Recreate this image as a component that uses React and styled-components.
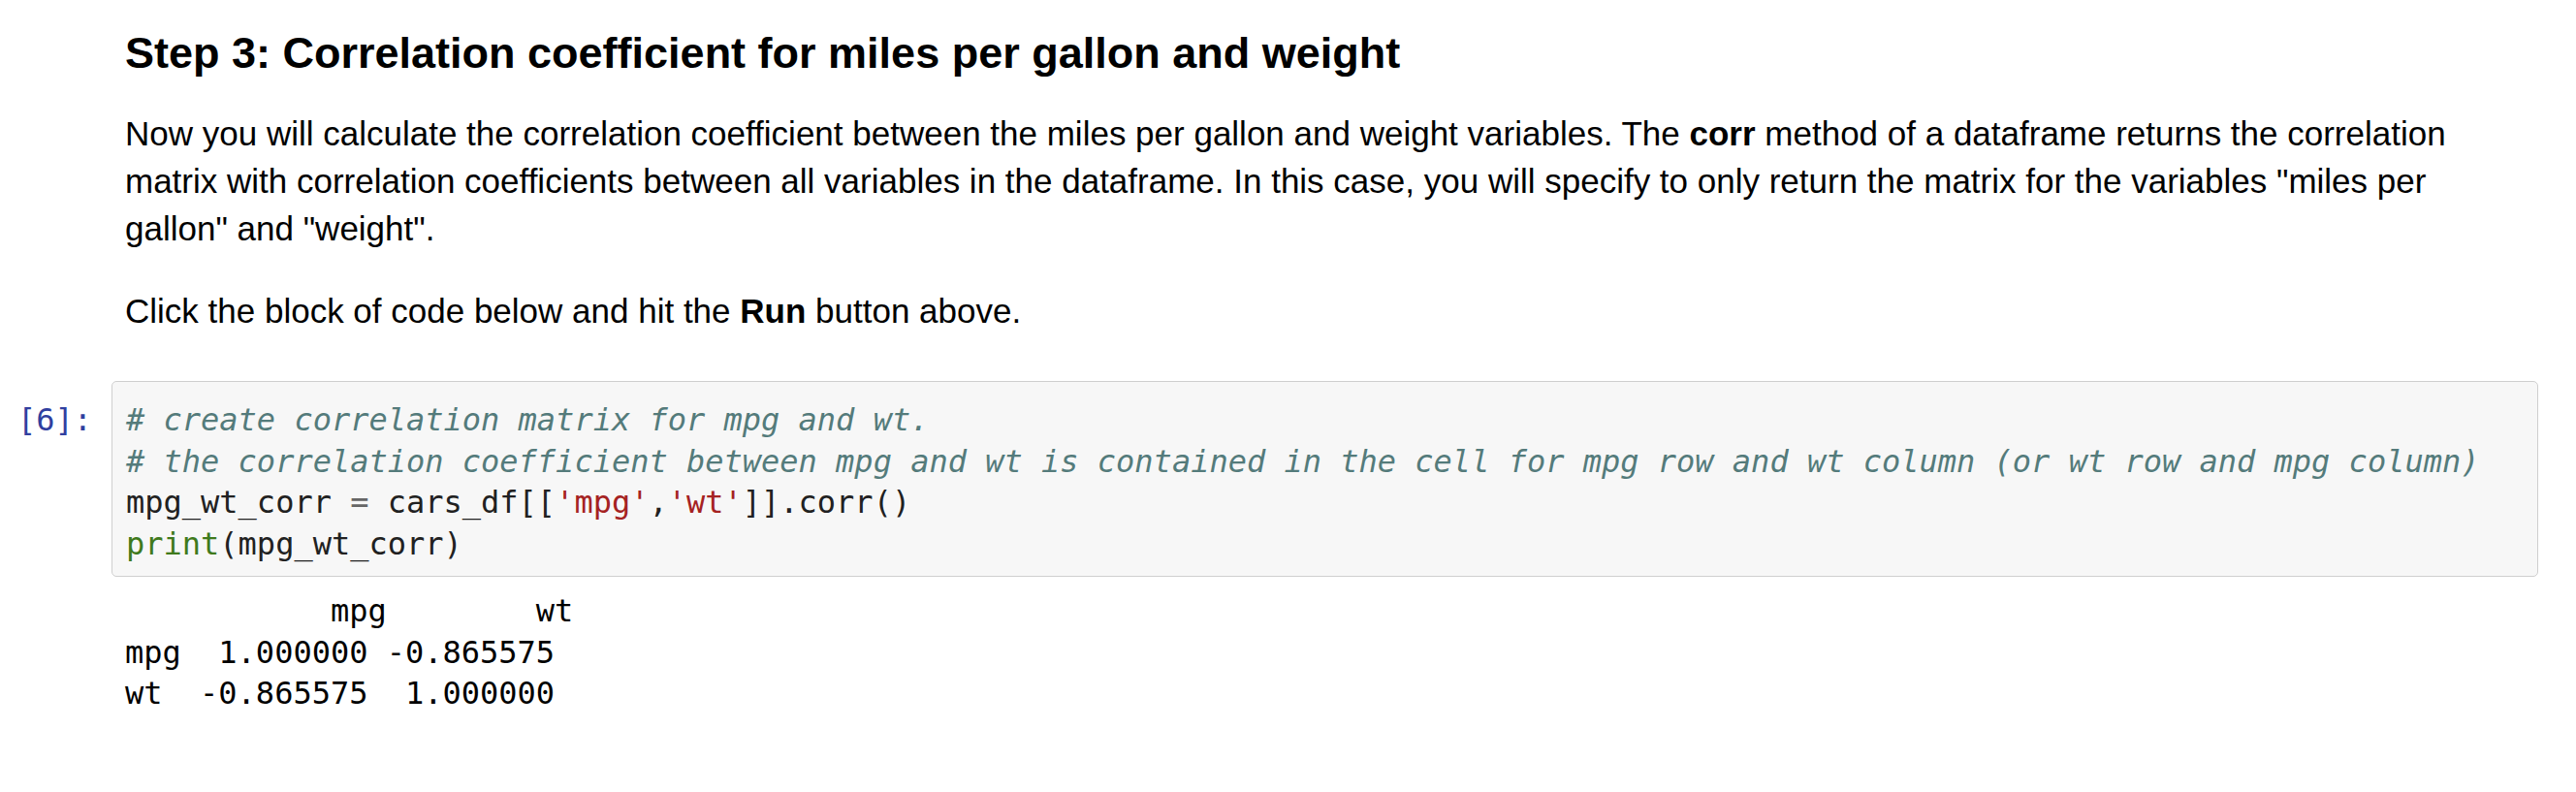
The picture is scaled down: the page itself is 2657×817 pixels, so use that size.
import React from "react";
import styled, { createGlobalStyle } from "styled-components";

const GlobalStyle = createGlobalStyle`
  html, body {
    margin: 0;
    padding: 0;
    background: #ffffff;
  }
  body {
    font-family: "Liberation Sans", Arial, sans-serif;
    color: #000000;
  }
`;

const Notebook = styled.div`
  display: flex;
  flex-direction: column;
  padding-right: 39px;
  overflow: hidden;
`;

const Row = styled.div`
  display: flex;
  align-items: flex-start;
`;

const Prompt = styled.div`
  width: 115px;
  min-width: 115px;
  max-width: 115px;
  display: flex;
  justify-content: flex-end;
  box-sizing: border-box;
  padding-right: 20px;
  padding-top: ${(p) => p.$top || 0}px;
  font-family: "DejaVu Sans Mono", "Liberation Mono", monospace;
  font-size: 32px;
  line-height: 42.5px;
  color: #303f9f;
  white-space: pre;
`;

const PromptText = styled.span`
  flex: 0 0 auto;
`;

const Rendered = styled.div`
  flex: 1;
  min-width: 0;
  padding: 30px 14px 48px 14px;
`;

const Heading = styled.h3`
  margin: 0;
  font-size: 45px;
  line-height: 50px;
  font-weight: 700;
`;

const Para = styled.p`
  margin: ${(p) => p.$top}px 0 0 0;
  font-size: 35px;
  line-height: 49px;
`;

const InputArea = styled.div`
  flex: 1;
  min-width: 0;
  box-sizing: border-box;
  background: #f7f7f7;
  border: 1px solid #cfcfcf;
  border-radius: 5px;
  padding: 18px 14px 12px 14px;
`;

const Code = styled.pre`
  margin: 0;
  font-family: "DejaVu Sans Mono", "Liberation Mono", monospace;
  font-size: 32px;
  line-height: 42.5px;
  color: #212121;
  white-space: pre;
`;

const Token = styled.span`
  color: ${(p) =>
    ({
      comment: "#547b7b",
      string: "#a52222",
      builtin: "#3f7a1c",
      op: "#666666",
    }[p.$kind] || "inherit")};
  font-style: ${(p) => (p.$kind === "comment" ? "italic" : "normal")};
`;

const OutputText = styled.pre`
  flex: 1;
  margin: 0;
  padding: 14px 14px 0 14px;
  font-family: "DejaVu Sans Mono", "Liberation Mono", monospace;
  font-size: 32px;
  line-height: 42.5px;
  color: #000000;
`;

const output = [
  "           mpg        wt",
  "mpg  1.000000 -0.865575",
  "wt  -0.865575  1.000000",
].join("\n");

const App = () => (
  <>
    <GlobalStyle />
    <Notebook>
      <Row>
        <Prompt />
        <Rendered>
          <Heading>Step 3: Correlation coefficient for miles per gallon and weight</Heading>
          <Para $top={33}>
            Now you will calculate the correlation coefficient between the miles per gallon and
            weight variables. The <b>corr</b> method of a dataframe returns the correlation matrix
            with correlation coefficients between all variables in the dataframe. In this case, you
            will specify to only return the matrix for the variables "miles per gallon" and
            "weight".
          </Para>
          <Para $top={36}>
            Click the block of code below and hit the <b>Run</b> button above.
          </Para>
        </Rendered>
      </Row>
      <Row>
        <Prompt $top={19}>
          <PromptText>In [6]:</PromptText>
        </Prompt>
        <InputArea>
          <Code>
            <Token $kind="comment"># create correlation matrix for mpg and wt.</Token>
            {"\n"}
            <Token $kind="comment">
              # the correlation coefficient between mpg and wt is contained in the cell for mpg row
              and wt column (or wt row and mpg column)
            </Token>
            {"\n"}
            mpg_wt_corr <Token $kind="op">=</Token> cars_df[[<Token $kind="string">'mpg'</Token>,
            <Token $kind="string">'wt'</Token>]].corr()
            {"\n"}
            <Token $kind="builtin">print</Token>(mpg_wt_corr)
          </Code>
        </InputArea>
      </Row>
      <Row>
        <Prompt />
        <OutputText>{output}</OutputText>
      </Row>
    </Notebook>
  </>
);

export default App;
